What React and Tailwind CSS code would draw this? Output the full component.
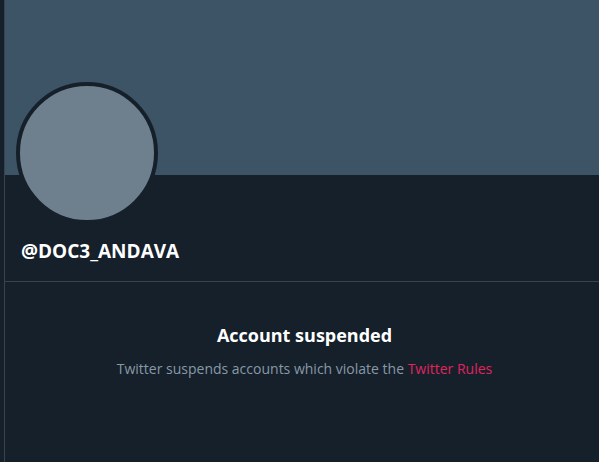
export default function App() {
  return (
    <div
      className="flex h-[462px] w-full overflow-hidden bg-[#15202b]"
      style={{ fontFamily: '"Open Sans", "Noto Sans", sans-serif' }}
    >
      <div className="w-[4px] shrink-0" />
      <div className="flex w-[600px] shrink-0 flex-col border-l border-[#38444d]">
        <div className="h-[175px] shrink-0 bg-[#3d5466]" />
        <div className="border-b border-[#38444d] px-[11px] pb-[18px]">
          <div className="-mt-[93px] h-[142px] w-[142px] rounded-full border-[4px] border-[#15202b] bg-[#6e7f8d]" />
          <div className="mt-[15px] pl-[5px] text-[19px] font-bold leading-[24px] text-white">
            @DOC3_ANDAVA
          </div>
        </div>
        <div className="flex flex-col items-center pt-[41px]">
          <h2 className="text-[18px] font-bold leading-[24px] text-white">Account suspended</h2>
          <p className="mt-[12px] text-[14px] leading-[20px] text-[#8899a6]">
            Twitter suspends accounts which violate the{" "}
            <a className="text-[#e0245e]">Twitter Rules</a>
          </p>
        </div>
      </div>
    </div>
  );
}
